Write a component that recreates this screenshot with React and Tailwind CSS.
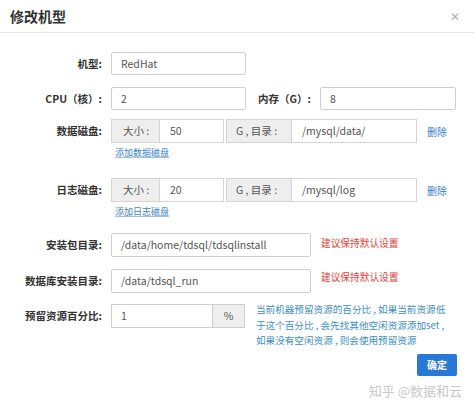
import React from "react";

const font = { fontFamily: '"Noto Sans CJK SC", "Noto Sans", sans-serif' };

function Label({ children, className = "" }) {
  return (
    <div className={`w-[102px] shrink-0 text-right text-[10.5px] font-bold text-[#333] ${className}`}>
      {children}
    </div>
  );
}

function TextInput({ value, className = "" }) {
  return (
    <div
      className={`h-[23px] border border-[#cfcfcf] rounded-[2px] bg-white pl-[9px] flex items-center text-[10.5px] text-[#555] ${className}`}
    >
      {value}
    </div>
  );
}

function DiskRow({ label, size, path, linkText }) {
  return (
    <div>
      <div className="flex items-center">
        <Label>{label}</Label>
        <div className="ml-[9px] flex h-[24px] text-[10.5px] text-[#555]">
          <div className="w-[49px] border border-[#d4d4d4] bg-[#eeeeee] flex items-center pl-[11px] whitespace-pre">大小 :</div>
          <div className="w-[64px] border border-l-0 border-[#d4d4d4] bg-white flex items-center pl-[10px]">{size}</div>
          <div className="ml-[2px] w-[66px] border border-[#d4d4d4] bg-[#eeeeee] flex items-center pl-[9px] whitespace-pre">G , 目录 :</div>
          <div className="w-[125px] border border-l-0 border-[#d4d4d4] bg-white flex items-center pl-[10px]">{path}</div>
        </div>
        <span className="ml-[10px] text-[10px] text-[#3a7fc8]">删除</span>
      </div>
      <div className="ml-[115px] mt-[4px] text-[9px] text-[#3a7fc8] underline decoration-[#9cc0e6] leading-[12px]">
        {linkText}
      </div>
    </div>
  );
}

export default function App() {
  return (
    <div className="w-[474px] h-[412px] bg-white relative overflow-hidden" style={font}>
      <div className="h-[33px] border-b border-[#e5e5e5] flex items-center justify-between pl-[10px] pr-[14px]">
        <span className="text-[14px] font-bold text-[#333]">修改机型</span>
        <span className="text-[12px] text-[#b0b0b0] leading-none">✕</span>
      </div>

      <div className="mt-[19px] flex items-center">
        <Label>机型:</Label>
        <TextInput value="RedHat" className="ml-[9px] w-[135px]" />
      </div>

      <div className="mt-[12px] flex items-center">
        <Label>CPU（核）:</Label>
        <TextInput value="2" className="ml-[9px] w-[135px]" />
        <div className="w-[65px] text-right text-[10.5px] font-bold text-[#333]">内存（G）:</div>
        <TextInput value="8" className="ml-[9px] w-[136px]" />
      </div>

      <div className="mt-[9px]">
        <DiskRow label="数据磁盘:" size="50" path="/mysql/data/" linkText="添加数据磁盘" />
      </div>

      <div className="mt-[19px]">
        <DiskRow label="日志磁盘:" size="20" path="/mysql/log" linkText="添加日志磁盘" />
      </div>

      <div className="mt-[15px] flex items-center">
        <Label>安装包目录:</Label>
        <TextInput value="/data/home/tdsql/tdsqlinstall" className="ml-[9px] w-[200px] h-[24px]" />
        <span className="ml-[10px] -mt-[4px] text-[9.7px] text-[#e0413a]">建议保持默认设置</span>
      </div>

      <div className="mt-[12px] flex items-center">
        <Label>数据库安装目录:</Label>
        <TextInput value="/data/tdsql_run" className="ml-[9px] w-[200px] h-[24px]" />
        <span className="ml-[10px] -mt-[7px] text-[9.7px] text-[#e0413a]">建议保持默认设置</span>
      </div>

      <div className="mt-[11px] flex items-start">
        <div className="flex items-center">
          <Label>预留资源百分比:</Label>
          <div className="ml-[9px] flex h-[24px] text-[10.5px] text-[#555]">
            <div className="w-[102px] border border-[#cfcfcf] bg-white flex items-center pl-[9px]">1</div>
            <div className="w-[32px] border border-l-0 border-[#cfcfcf] bg-[#eeeeee] flex items-center justify-center">%</div>
          </div>
        </div>
        <div className="ml-[11px] -mt-[2px] text-[9.6px] leading-[15.5px] text-[#3e8fbf] whitespace-nowrap">
          <div>当前机器预留资源的百分比 , 如果当前资源低</div>
          <div>于这个百分比 , 会先找其他空闲资源添加set ,</div>
          <div>如果没有空闲资源 , 则会使用预留资源</div>
        </div>
      </div>

      <div className="mt-[5px] flex justify-end pr-[17px]">
        <button className="w-[40px] h-[22px] rounded-[2px] bg-[#2a78d6] text-white text-[10px] font-bold">确定</button>
      </div>

      <div className="mt-[7px] flex justify-end pr-[12px] text-[13px] text-[#c9c9c9] leading-[16px]">
        知乎 @数据和云
      </div>
    </div>
  );
}
